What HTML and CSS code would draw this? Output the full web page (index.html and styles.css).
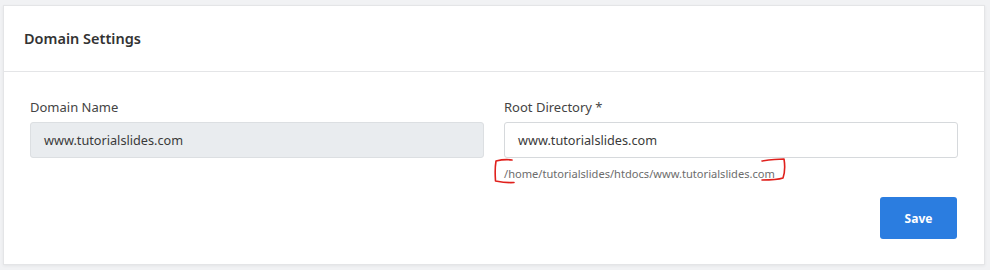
FILE: index.html
```html
<!DOCTYPE html>
<html lang="en">
<head>
<meta charset="utf-8">
<title>Domain Settings</title>
<link rel="stylesheet" href="styles.css">
</head>
<body>
<div class="card">
  <div class="card-header">Domain Settings</div>
  <div class="card-body">
    <div class="form-row">
      <div class="field">
        <label class="label">Domain Name</label>
        <div class="input disabled">www.tutorialslides.com</div>
      </div>
      <div class="field">
        <label class="label">Root Directory *</label>
        <div class="input">www.tutorialslides.com</div>
        <div class="help">
          <span class="help-text">/home/tutorialslides/htdocs/www.tutorialslides.com</span>
          <svg class="mark mark-left" width="24" height="28" viewBox="0 0 24 28"><path d="M20 2 C14 1 8 2 4 3 C3 9 3 16 3.5 23 C9 24 15 25 22 24.5" fill="none" stroke="#e0201c" stroke-width="1.6" stroke-linecap="round" stroke-linejoin="round"/></svg>
          <svg class="mark mark-right" width="30" height="28" viewBox="0 0 30 28"><path d="M3 4 C10 3 18 2 25 2 C26 8 26 15 24 21 C18 23 10 23 3 23" fill="none" stroke="#e0201c" stroke-width="1.6" stroke-linecap="round" stroke-linejoin="round"/></svg>
        </div>
      </div>
    </div>
    <div class="actions">
      <button class="btn">Save</button>
    </div>
  </div>
</div>
</body>
</html>
```
FILE: styles.css
```css
html, body {
  margin: 0;
  padding: 0;
}
body {
  background: #f1f2f4;
  font-family: "Noto Sans", "Open Sans", sans-serif;
  width: 990px;
  height: 270px;
  overflow: hidden;
}
.card {
  margin: 5px 5px 5px 3px;
  height: 260px;
  box-sizing: border-box;
  background: #fff;
  border: 1px solid #e4e5e7;
  box-shadow: 0 1px 3px rgba(0,0,0,0.06);
}
.card-header {
  height: 66px;
  box-sizing: border-box;
  padding: 0 20px;
  display: flex;
  align-items: center;
  font-size: 14.5px;
  font-weight: 600;
  color: #333;
  border-bottom: 1px solid #e4e5e7;
  padding-bottom: 2px;
}
.card-body {
  padding: 26px 27px 0 26px;
}
.form-row {
  display: grid;
  grid-template-columns: 454px 454px;
  column-gap: 20px;
}
.field {
  display: flex;
  flex-direction: column;
}
.label {
  font-size: 13px;
  color: #444;
  line-height: 18px;
  margin-bottom: 6px;
}
.input {
  height: 36px;
  box-sizing: border-box;
  border: 1px solid #d6d9dc;
  border-radius: 3px;
  padding: 0 13px;
  display: flex;
  align-items: center;
  font-size: 12.7px;
  color: #3a3a3a;
  background: #fff;
}
.input.disabled {
  background: #e9ecef;
  border-color: #dcdfe2;
}
.help {
  position: relative;
  margin-top: 6px;
  height: 18px;
  display: flex;
  align-items: center;
}
.help-text {
  font-size: 11.1px;
  color: #6c6c6c;
}
.mark {
  position: absolute;
}
.mark-left {
  left: -12px;
  top: -6px;
}
.mark-right {
  left: 255px;
  top: -7px;
}
.actions {
  display: flex;
  justify-content: flex-end;
  margin-top: 15px;
}
.btn {
  width: 77px;
  height: 42px;
  border: none;
  border-radius: 3px;
  background: #2b7de0;
  color: #fff;
  font-family: "Noto Sans", sans-serif;
  font-weight: 700;
  font-size: 12px;
  cursor: pointer;
}
```
